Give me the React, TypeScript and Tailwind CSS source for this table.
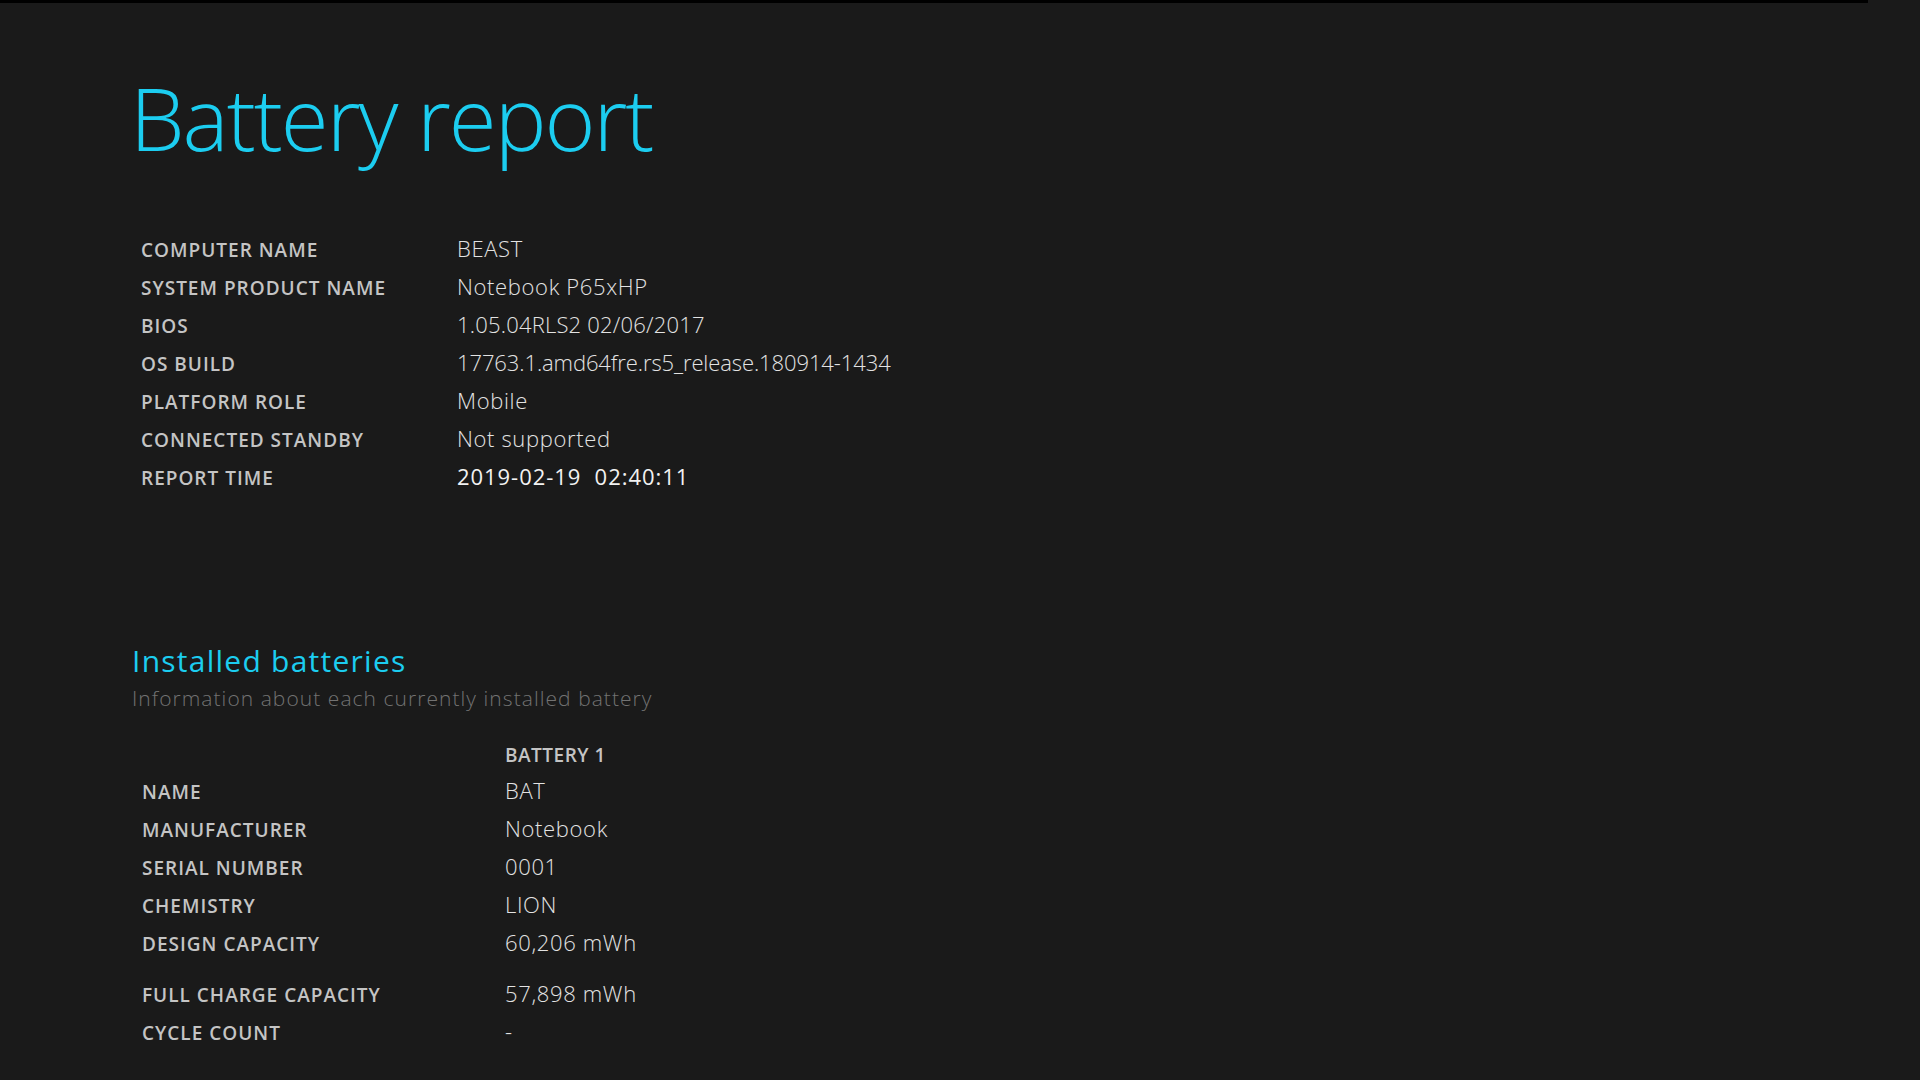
const systemInfo = [
  { label: "COMPUTER NAME", value: "BEAST" },
  { label: "SYSTEM PRODUCT NAME", value: "Notebook P65xHP" },
  { label: "BIOS", value: "1.05.04RLS2 02/06/2017", digits: true },
  { label: "OS BUILD", value: "17763.1.amd64fre.rs5_release.180914-1434", tight: true },
  { label: "PLATFORM ROLE", value: "Mobile" },
  { label: "CONNECTED STANDBY", value: "Not supported" },
  { label: "REPORT TIME", value: "2019-02-19\u00a0\u00a002:40:11", strong: true },
];

const batteryInfo = [
  { label: "NAME", value: "BAT" },
  { label: "MANUFACTURER", value: "Notebook" },
  { label: "SERIAL NUMBER", value: "0001" },
  { label: "CHEMISTRY", value: "LION" },
  { label: "DESIGN CAPACITY", value: "60,206 mWh" },
  { label: "FULL CHARGE CAPACITY", value: "57,898 mWh", spaced: true },
  { label: "CYCLE COUNT", value: "-" },
];

function valueClass(row: { strong?: boolean; tight?: boolean; digits?: boolean }) {
  if (row.strong) return "text-[22px] leading-[38px] font-normal tracking-[0.95px] text-[#f2f2f2]";
  if (row.tight) return "text-[22px] leading-[38px] font-light tracking-[-0.1px] text-[#e3e3e3]";
  if (row.digits) return "text-[22px] leading-[38px] font-light tracking-[0.2px] text-[#e3e3e3]";
  return "text-[22px] leading-[38px] font-light tracking-[0.65px] text-[#e3e3e3]";
}

const App = () => {
  return (
    <div className="min-h-screen w-full bg-[#1a1a1a] font-['Open_Sans',sans-serif] overflow-hidden">
      {/* thin dark strip along the top edge */}
      <div className="h-[3px] w-[1868px] bg-black" />

      <div className="pl-[132px]">
        <h1 className="mt-[71px] -ml-[2px] text-[87px] leading-none font-light tracking-[-2px] text-[#1ccdf0]">
          Battery report
        </h1>

        <div className="mt-[68px] pl-[9px]">
          {systemInfo.map((row) => (
            <div key={row.label} className="flex h-[38px] items-baseline">
              <span className="w-[316px] text-[19px] leading-[38px] font-semibold tracking-[1px] text-[#c4c4c4]">
                {row.label}
              </span>
              <span className={valueClass(row)}>{row.value}</span>
            </div>
          ))}
        </div>

        <div className="mt-[146px]">
          <h2 className="text-[30px] leading-[40px] font-normal tracking-[1.25px] text-[#1ccdf0]">
            Installed batteries
          </h2>
          <p className="mt-[2px] text-[21px] leading-[30px] font-light tracking-[1.05px] text-[#727272]">
            Information about each currently installed battery
          </p>
        </div>

        <div className="mt-[26px] pl-[10px]">
          <div className="flex h-[32px] items-baseline">
            <span className="w-[363px]" />
            <span className="text-[19px] leading-[32px] font-semibold tracking-[0.5px] text-[#c4c4c4]">
              BATTERY 1
            </span>
          </div>
          {batteryInfo.map((row) => (
            <div
              key={row.label}
              className={
                row.spaced
                  ? "mt-[13px] flex h-[38px] items-baseline"
                  : "flex h-[38px] items-baseline"
              }
            >
              <span className="w-[363px] text-[19px] leading-[38px] font-semibold tracking-[1px] text-[#c4c4c4]">
                {row.label}
              </span>
              <span className={valueClass(row)}>{row.value}</span>
            </div>
          ))}
        </div>
      </div>
    </div>
  );
};

export default App;
